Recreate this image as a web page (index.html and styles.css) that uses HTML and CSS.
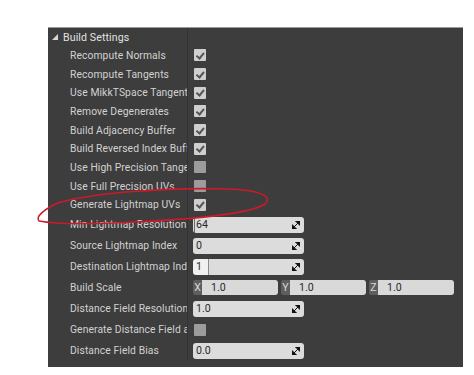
FILE: index.html
```html
<!DOCTYPE html>
<html lang="en">
<head>
  <meta charset="UTF-8" />
  <meta name="viewport" content="width=device-width, initial-scale=1.0" />
  <title>Build Settings</title>
  <link rel="stylesheet" href="styles.css">
</head>
<body>
  <div class="page">
    <div class="panel">
      <div class="row header">
        <div class="label"><span class="arrow"></span>Build Settings</div>
        <div class="value"></div>
      </div>

      <div class="row check-row">
        <div class="label">Recompute Normals</div>
        <div class="value"><span class="check on"></span></div>
      </div>
      <div class="row check-row">
        <div class="label">Recompute Tangents</div>
        <div class="value"><span class="check on"></span></div>
      </div>
      <div class="row check-row">
        <div class="label">Use MikkTSpace Tangent Space</div>
        <div class="value"><span class="check on"></span></div>
      </div>
      <div class="row check-row">
        <div class="label">Remove Degenerates</div>
        <div class="value"><span class="check on"></span></div>
      </div>
      <div class="row check-row">
        <div class="label">Build Adjacency Buffer</div>
        <div class="value"><span class="check on"></span></div>
      </div>
      <div class="row check-row">
        <div class="label">Build Reversed Index Buffer</div>
        <div class="value"><span class="check on"></span></div>
      </div>
      <div class="row check-row">
        <div class="label">Use High Precision Tangent Basis</div>
        <div class="value"><span class="check"></span></div>
      </div>
      <div class="row check-row">
        <div class="label">Use Full Precision UVs</div>
        <div class="value"><span class="check"></span></div>
      </div>
      <div class="row check-row">
        <div class="label">Generate Lightmap UVs</div>
        <div class="value"><span class="check on"></span></div>
      </div>

      <div class="row input-row">
        <div class="label">Min Lightmap Resolution</div>
        <div class="value">
          <div class="field tick">64<svg class="spin" viewBox="0 0 8 8"><polygon points="3.5,0 8,0 8,4.5" /><polygon points="0,3.5 0,8 4.5,8" /><line x1="1" y1="7" x2="7" y2="1" /></svg></div>
        </div>
      </div>
      <div class="row input-row">
        <div class="label">Source Lightmap Index</div>
        <div class="value">
          <div class="field">0<svg class="spin" viewBox="0 0 8 8"><polygon points="3.5,0 8,0 8,4.5" /><polygon points="0,3.5 0,8 4.5,8" /><line x1="1" y1="7" x2="7" y2="1" /></svg></div>
        </div>
      </div>
      <div class="row input-row">
        <div class="label">Destination Lightmap Index</div>
        <div class="value">
          <div class="field filled">1<svg class="spin" viewBox="0 0 8 8"><polygon points="3.5,0 8,0 8,4.5" /><polygon points="0,3.5 0,8 4.5,8" /><line x1="1" y1="7" x2="7" y2="1" /></svg></div>
        </div>
      </div>
      <div class="row input-row">
        <div class="label">Build Scale</div>
        <div class="value vector">
          <div class="axis"><span class="axis-name">X</span><span class="axis-field">1.0</span></div>
          <div class="axis"><span class="axis-name">Y</span><span class="axis-field">1.0</span></div>
          <div class="axis"><span class="axis-name">Z</span><span class="axis-field">1.0</span></div>
        </div>
      </div>
      <div class="row input-row">
        <div class="label">Distance Field Resolution Scale</div>
        <div class="value">
          <div class="field">1.0<svg class="spin" viewBox="0 0 8 8"><polygon points="3.5,0 8,0 8,4.5" /><polygon points="0,3.5 0,8 4.5,8" /><line x1="1" y1="7" x2="7" y2="1" /></svg></div>
        </div>
      </div>
      <div class="row input-row">
        <div class="label">Generate Distance Field as if Two Sided</div>
        <div class="value"><span class="check"></span></div>
      </div>
      <div class="row input-row">
        <div class="label">Distance Field Bias</div>
        <div class="value">
          <div class="field">0.0<svg class="spin" viewBox="0 0 8 8"><polygon points="3.5,0 8,0 8,4.5" /><polygon points="0,3.5 0,8 4.5,8" /><line x1="1" y1="7" x2="7" y2="1" /></svg></div>
        </div>
      </div>
    </div>

    <!-- hand drawn red circle around the lightmap option -->
    <svg class="scribble" viewBox="0 0 474 375">
      <path d="M58,203 C90,193 170,187 228,189 C258,190 274,196 265,204 C250,214 195,219 135,222 C95,224 55,224 39,221 C35,217 44,209 60,202" />
    </svg>
  </div>
</body>
</html>
```

FILE: styles.css
```css
html, body {
  margin: 0;
  padding: 0;
  background: #ffffff;
  font-family: Roboto, 'Liberation Sans', sans-serif;
}
.page {
  position: relative;
  width: 474px;
  height: 375px;
  padding: 27px 0 0 48px;
  box-sizing: border-box;
}
.panel {
  width: 415px;
  height: 340px;
  background: #3d3d3d;
  border-top: 1px solid #9a9a9a;
  box-sizing: border-box;
}
.row {
  display: grid;
  grid-template-columns: 140px 1fr;
}
.label {
  display: flex;
  align-items: center;
  padding-left: 22px;
  border-right: 1px solid #323232;
  color: #d2d2d2;
  font-size: 10.3px;
  letter-spacing: 0.1px;
  white-space: nowrap;
  overflow: hidden;
}
.value {
  display: flex;
  align-items: center;
  padding-left: 5px;
}
.header {
  height: 18px;
}
.header .label {
  padding-left: 4px;
  color: #e2e2e2;
  font-size: 10.6px;
}
.arrow {
  width: 0;
  height: 0;
  border-left: 6px solid transparent;
  border-bottom: 6px solid #d8d8d8;
  margin-right: 5px;
}
.check-row {
  height: 18.7px;
}
.input-row {
  height: 21px;
}
.check {
  position: relative;
  width: 12px;
  height: 12px;
  margin-left: 1px;
  border-radius: 1px;
  background: #9c9c9c;
}
.check.on {
  background: #cfcfcf;
}
.check.on::after {
  content: "";
  position: absolute;
  left: 4px;
  top: 1.5px;
  width: 2.5px;
  height: 5.5px;
  border-right: 2px solid #555555;
  border-bottom: 2px solid #555555;
  transform: rotate(40deg);
}
.field {
  display: flex;
  align-items: center;
  width: 111px;
  height: 16px;
  padding: 0 3px;
  box-sizing: border-box;
  border-radius: 3px;
  background: #dcdcdc;
  color: #2a2a2a;
  font-size: 10.6px;
}
.field.tick {
  background: linear-gradient(to right, #dcdcdc 1px, #6a6a6a 1px 2px, #dcdcdc 2px);
}
.field.filled {
  background: linear-gradient(to right, #f0f0f0 15px, #8a8a8a 15px 16px, #dcdcdc 16px);
}
.spin {
  width: 8px;
  height: 8px;
  margin-left: auto;
  margin-right: 1px;
  fill: #111111;
  stroke: #111111;
  stroke-width: 1;
}
.vector {
  gap: 3px;
}
.axis {
  display: flex;
  height: 15px;
}
.axis-name {
  display: flex;
  align-items: center;
  justify-content: center;
  width: 9px;
  background: #5e5e5e;
  color: #d8d8d8;
  font-size: 10.6px;
  border-radius: 2px 0 0 2px;
}
.axis-field {
  display: flex;
  align-items: center;
  width: 76px;
  padding-left: 9px;
  box-sizing: border-box;
  background: #d9d9d9;
  color: #2a2a2a;
  font-size: 10.6px;
  border-radius: 0 3px 3px 0;
}
.scribble {
  position: absolute;
  left: 0;
  top: 0;
  width: 474px;
  height: 375px;
  pointer-events: none;
}
.scribble path {
  fill: none;
  stroke: #cc1a2a;
  stroke-width: 1.6;
  stroke-linecap: round;
}
```
